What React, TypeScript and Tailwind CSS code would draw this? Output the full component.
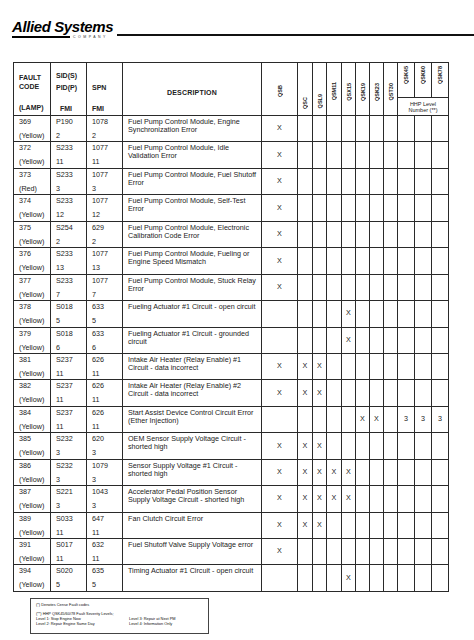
type Row = {
  code: string;
  lamp: string;
  sid: string;
  sidFmi: string;
  spn: string;
  spnFmi: string;
  desc: string;
  marks: string;
};

const engines = ['QSB', 'QSC', 'QSL9', 'QSM11', 'QSX15', 'QSK19', 'QSK23', 'QST30'];
const hhp = ['QSK45', 'QSK60', 'QSK78'];

// padding under each rotated engine label, read off the scan
const labelPad: Record<string, string> = {
  QSB: 'pb-[16px]',
  QSC: 'pb-[4px]',
  QSL9: 'pb-[4px]',
  QSM11: 'pb-[12px]',
  QSX15: 'pb-[12px]',
  QSK19: 'pb-[12px]',
  QSK23: 'pb-[12px]',
  QST30: 'pb-[12px]',
};

const rows: Row[] = [
  { code: '369', lamp: '(Yellow)', sid: 'P190', sidFmi: '2', spn: '1078', spnFmi: '2', desc: 'Fuel Pump Control Module, Engine Synchronization Error', marks: 'X..........' },
  { code: '372', lamp: '(Yellow)', sid: 'S233', sidFmi: '11', spn: '1077', spnFmi: '11', desc: 'Fuel Pump Control Module, Idle Validation Error', marks: 'X..........' },
  { code: '373', lamp: '(Red)', sid: 'S233', sidFmi: '3', spn: '1077', spnFmi: '3', desc: 'Fuel Pump Control Module, Fuel Shutoff Error', marks: 'X..........' },
  { code: '374', lamp: '(Yellow)', sid: 'S233', sidFmi: '12', spn: '1077', spnFmi: '12', desc: 'Fuel Pump Control Module, Self-Test Error', marks: 'X..........' },
  { code: '375', lamp: '(Yellow)', sid: 'S254', sidFmi: '2', spn: '629', spnFmi: '2', desc: 'Fuel Pump Control Module, Electronic Calibration Code Error', marks: 'X..........' },
  { code: '376', lamp: '(Yellow)', sid: 'S233', sidFmi: '13', spn: '1077', spnFmi: '13', desc: 'Fuel Pump Control Module, Fueling or Engine Speed Mismatch', marks: 'X..........' },
  { code: '377', lamp: '(Yellow)', sid: 'S233', sidFmi: '7', spn: '1077', spnFmi: '7', desc: 'Fuel Pump Control Module, Stuck Relay Error', marks: 'X..........' },
  { code: '378', lamp: '(Yellow)', sid: 'S018', sidFmi: '5', spn: '633', spnFmi: '5', desc: 'Fueling Actuator #1 Circuit - open circuit', marks: '....X......' },
  { code: '379', lamp: '(Yellow)', sid: 'S018', sidFmi: '6', spn: '633', spnFmi: '6', desc: 'Fueling Actuator #1 Circuit - grounded circuit', marks: '....X......' },
  { code: '381', lamp: '(Yellow)', sid: 'S237', sidFmi: '11', spn: '626', spnFmi: '11', desc: 'Intake Air Heater (Relay Enable) #1 Circuit - data incorrect', marks: 'XXX........' },
  { code: '382', lamp: '(Yellow)', sid: 'S237', sidFmi: '11', spn: '626', spnFmi: '11', desc: 'Intake Air Heater (Relay Enable) #2 Circuit - data incorrect', marks: 'XXX........' },
  { code: '384', lamp: '(Yellow)', sid: 'S237', sidFmi: '11', spn: '626', spnFmi: '11', desc: 'Start Assist Device Control Circuit Error (Ether Injection)', marks: '.....XX.333' },
  { code: '385', lamp: '(Yellow)', sid: 'S232', sidFmi: '3', spn: '620', spnFmi: '3', desc: 'OEM Sensor Supply Voltage Circuit - shorted high', marks: 'XXX........' },
  { code: '386', lamp: '(Yellow)', sid: 'S232', sidFmi: '3', spn: '1079', spnFmi: '3', desc: 'Sensor Supply Voltage #1 Circuit - shorted high', marks: 'XXXXX......' },
  { code: '387', lamp: '(Yellow)', sid: 'S221', sidFmi: '3', spn: '1043', spnFmi: '3', desc: 'Accelerator Pedal Position Sensor Supply Voltage Circuit - shorted high', marks: 'XXXXX......' },
  { code: '389', lamp: '(Yellow)', sid: 'S033', sidFmi: '11', spn: '647', spnFmi: '11', desc: 'Fan Clutch Circuit Error', marks: 'XXX........' },
  { code: '391', lamp: '(Yellow)', sid: 'S017', sidFmi: '11', spn: '632', spnFmi: '11', desc: 'Fuel Shutoff Valve Supply Voltage error', marks: 'X..........' },
  { code: '394', lamp: '(Yellow)', sid: 'S020', sidFmi: '5', spn: '635', spnFmi: '5', desc: 'Timing Actuator #1 Circuit - open circuit', marks: '....X......' },
];

const cell = 'border border-[#2a2a2a]';

const TwoLine = ({ top, bottom }: { top: string; bottom: string }) => (
  <td className={`${cell} align-top pl-[5px] pt-[2px]`}>
    <div className="leading-[8px]">{top}</div>
    <div className="leading-[8px] mt-[6px]">{bottom}</div>
  </td>
);

const Logo = () => (
  <div className="flex items-start h-[62px] pt-[20px] pl-[12px]">
    <div className="flex flex-col">
      <div className="text-[15px] font-bold italic leading-[14px] tracking-[-0.4px] text-black">
        Allied Systems
      </div>
      <div className="flex items-center mt-[1px]">
        <div className="w-[58px] h-[1.5px] bg-black" />
        <div className="ml-[3px] text-[3.5px] leading-[4px] tracking-[2.5px] text-[#333]">
          COMPANY
        </div>
      </div>
    </div>
    <div className="flex-1 h-[2px] bg-[#111] mt-[14px] ml-[4px]" />
  </div>
);

const App = () => {
  return (
    <div className="w-[474px] h-[640px] bg-white text-[#222] font-['Liberation_Sans',Arial,sans-serif] overflow-hidden">
      <Logo />
      <table className="ml-[13px] w-[435px] table-fixed border-collapse text-[7.2px]">
        <colgroup>
          <col className="w-[37px]" />
          <col className="w-[36px]" />
          <col className="w-[36px]" />
          <col className="w-[139px]" />
          <col className="w-[36px]" />
          <col className="w-[15px]" />
          <col className="w-[14px]" />
          <col className="w-[15px]" />
          <col className="w-[14px]" />
          <col className="w-[14px]" />
          <col className="w-[14px]" />
          <col className="w-[14px]" />
          <col className="w-[17px]" />
          <col className="w-[17px]" />
          <col className="w-[17px]" />
        </colgroup>
        <thead className="font-bold text-[7px]">
          <tr className="h-[35px]">
            <th rowSpan={2} className={`${cell} align-top text-left pl-[5px] pt-[10px] font-bold`}>
              <div className="leading-[9px]">FAULT</div>
              <div className="leading-[9px]">CODE</div>
              <div className="leading-[9px] mt-[12px]">(LAMP)</div>
            </th>
            <th rowSpan={2} className={`${cell} align-top text-left pl-[5px] pt-[8px] font-bold`}>
              <div className="leading-[9px]">SID(S)</div>
              <div className="leading-[9px] mt-[3px]">PID(P)</div>
              <div className="leading-[9px] mt-[12px] pl-[4px]">FMI</div>
            </th>
            <th rowSpan={2} className={`${cell} align-top text-left pl-[5px] pt-[20px] font-bold`}>
              <div className="leading-[9px]">SPN</div>
              <div className="leading-[9px] mt-[12px]">FMI</div>
            </th>
            <th rowSpan={2} className={`${cell} align-top pt-[25px] text-center font-bold tracking-[0.2px]`}>
              DESCRIPTION
            </th>
            {engines.map((e) => (
              <th
                key={e}
                rowSpan={2}
                className={`${cell} align-bottom text-center ${labelPad[e]} font-bold text-[5.5px]`}
              >
                <span className="inline-block [writing-mode:vertical-rl] rotate-180 leading-[6px]">
                  {e}
                </span>
              </th>
            ))}
            {hhp.map((e) => (
              <th key={e} className={`${cell} align-top text-center pt-[3px] font-bold text-[5.5px]`}>
                <span className="inline-block [writing-mode:vertical-rl] rotate-180 leading-[6px]">
                  {e}
                </span>
              </th>
            ))}
          </tr>
          <tr className="h-[18px]">
            <th colSpan={3} className={`${cell} align-middle text-center font-normal text-[5.5px] leading-[6px]`}>
              <div>HHP Level</div>
              <div>Number (**)</div>
            </th>
          </tr>
        </thead>
        <tbody>
          {rows.map((r) => (
            <tr key={r.code} className="h-[26.45px]">
              <TwoLine top={r.code} bottom={r.lamp} />
              <TwoLine top={r.sid} bottom={r.sidFmi} />
              <TwoLine top={r.spn} bottom={r.spnFmi} />
              <td className={`${cell} align-top pl-[5px] pr-[2px] pt-[2px] leading-[8px]`}>{r.desc}</td>
              {r.marks.split('').map((m, i) => (
                <td key={i} className={`${cell} align-middle text-center`}>
                  {m === '.' ? '' : m}
                </td>
              ))}
            </tr>
          ))}
        </tbody>
      </table>
      <div className="ml-[30px] mt-[6px] w-[179px] h-[36px] border-[1.5px] border-[#444] pl-[5px] pt-[4px] text-[3.9px] leading-[4.5px] text-[#111]">
        <div>(*) Denotes Cense Fault codes</div>
        <div className="mt-[5px]">(**) HHP QSK45/60/78 Fault Severity Levels;</div>
        <div className="flex mt-[0.5px]">
          <div className="w-[93px]">Level 1: Stop Engine Now</div>
          <div>Level 3: Repair at Next PM</div>
        </div>
        <div className="flex">
          <div className="w-[93px]">Level 2: Repair Engine Same Day</div>
          <div>Level 4: Information Only</div>
        </div>
      </div>
    </div>
  );
};

export default App;
